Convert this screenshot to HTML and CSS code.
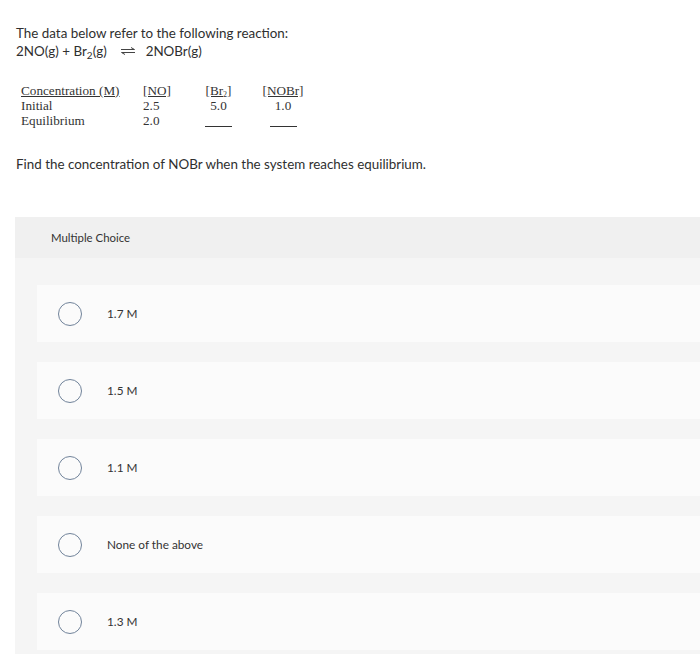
FILE: index.html
```html
<!DOCTYPE html>
<html>
<head>
<meta charset="utf-8">
<link rel="stylesheet" href="styles.css">
</head>
<body>
<div class="intro">
  <p class="line">The data below refer to the following reaction:</p>
  <p class="line">2NO(g) + Br<sub class="sub">2</sub>(g)
    <svg class="eq" width="16" height="8" viewBox="0 0 16 8"><path d="M1 2.5H14.5L11 0.5M15 5.5H1.5L5 7.5" fill="none" stroke="#444" stroke-width="1"/></svg>
    2NOBr(g)</p>
</div>
<div class="ctable">
  <span class="c1 u">Concentration (M)</span>
  <span class="c2 u">[NO]</span>
  <span class="c3 u">[Br<sub class="tsub">2</sub>]</span>
  <span class="gap"></span>
  <span class="c4 u">[NOBr]</span>
  <span class="c1">Initial</span>
  <span class="c2">2.5</span>
  <span class="c3">5.0</span>
  <span class="gap"></span>
  <span class="c4">1.0</span>
  <span class="c1">Equilibrium</span>
  <span class="c2">2.0</span>
  <span class="c3"><span class="blank"></span></span>
  <span class="gap"></span>
  <span class="c4"><span class="blank"></span></span>
</div>
<p class="question">Find the concentration of NOBr when the system reaches equilibrium.</p>
<div class="mc">
  <div class="mc-head">Multiple Choice</div>
  <div class="mc-body">
    <div class="opt"><span class="radio"></span><span class="label">1.7 M</span></div>
    <div class="opt"><span class="radio"></span><span class="label">1.5 M</span></div>
    <div class="opt"><span class="radio"></span><span class="label">1.1 M</span></div>
    <div class="opt"><span class="radio"></span><span class="label">None of the above</span></div>
    <div class="opt"><span class="radio"></span><span class="label">1.3 M</span></div>
  </div>
</div>
</body>
</html>
```
FILE: styles.css
```css
html, body {
  margin: 0;
  padding: 0;
  background: #ffffff;
}
body {
  font-family: Lato, "Open Sans", sans-serif;
  color: #2f2f2f;
  width: 700px;
  overflow: hidden;
}
.intro {
  padding: 24px 16px 0;
}
.line {
  margin: 0;
  font-size: 13.4px;
  line-height: 18px;
}
.sub {
  font-size: 10px;
  vertical-align: -3px;
  line-height: 0;
}
.eq {
  margin: 0 6px 0 10px;
  vertical-align: 1px;
}
.ctable {
  display: grid;
  grid-template-columns: 122px 62px 27px 29px 44px;
  margin: 23px 0 0 21px;
  font-family: "Liberation Serif", "Times New Roman", serif;
  font-size: 13.2px;
  line-height: 15px;
  color: #333;
}
.c1, .c2, .c3, .c4 {
  white-space: nowrap;
}
.u {
  text-decoration: underline;
  text-underline-offset: 1px;
}
.c3, .c4 {
  text-align: center;
}
.tsub {
  font-size: 8px;
  vertical-align: -2px;
  line-height: 0;
}
.blank {
  display: inline-block;
  width: 27px;
  height: 13px;
  border-bottom: 1px solid #333;
  vertical-align: top;
}
.question {
  margin: 27px 0 0 16px;
  font-size: 13.4px;
  line-height: 18px;
}
.mc {
  margin: 44px 0 0 15px;
  background: #f5f5f5;
}
.mc-head {
  height: 41px;
  display: flex;
  align-items: center;
  padding-left: 36px;
  background: #f0f0f0;
  font-size: 11.4px;
  color: #333;
}
.mc-body {
  display: flex;
  flex-direction: column;
  gap: 20px;
  padding: 27px 0 5px 22px;
}
.opt {
  height: 57px;
  display: flex;
  align-items: center;
  padding-left: 21px;
  background: #fbfbfb;
}
.radio {
  width: 22px;
  height: 22px;
  border: 1.5px solid #71839a;
  border-radius: 50%;
  flex: none;
}
.label {
  margin-left: 25px;
  font-size: 11.8px;
  color: #333;
}
```
